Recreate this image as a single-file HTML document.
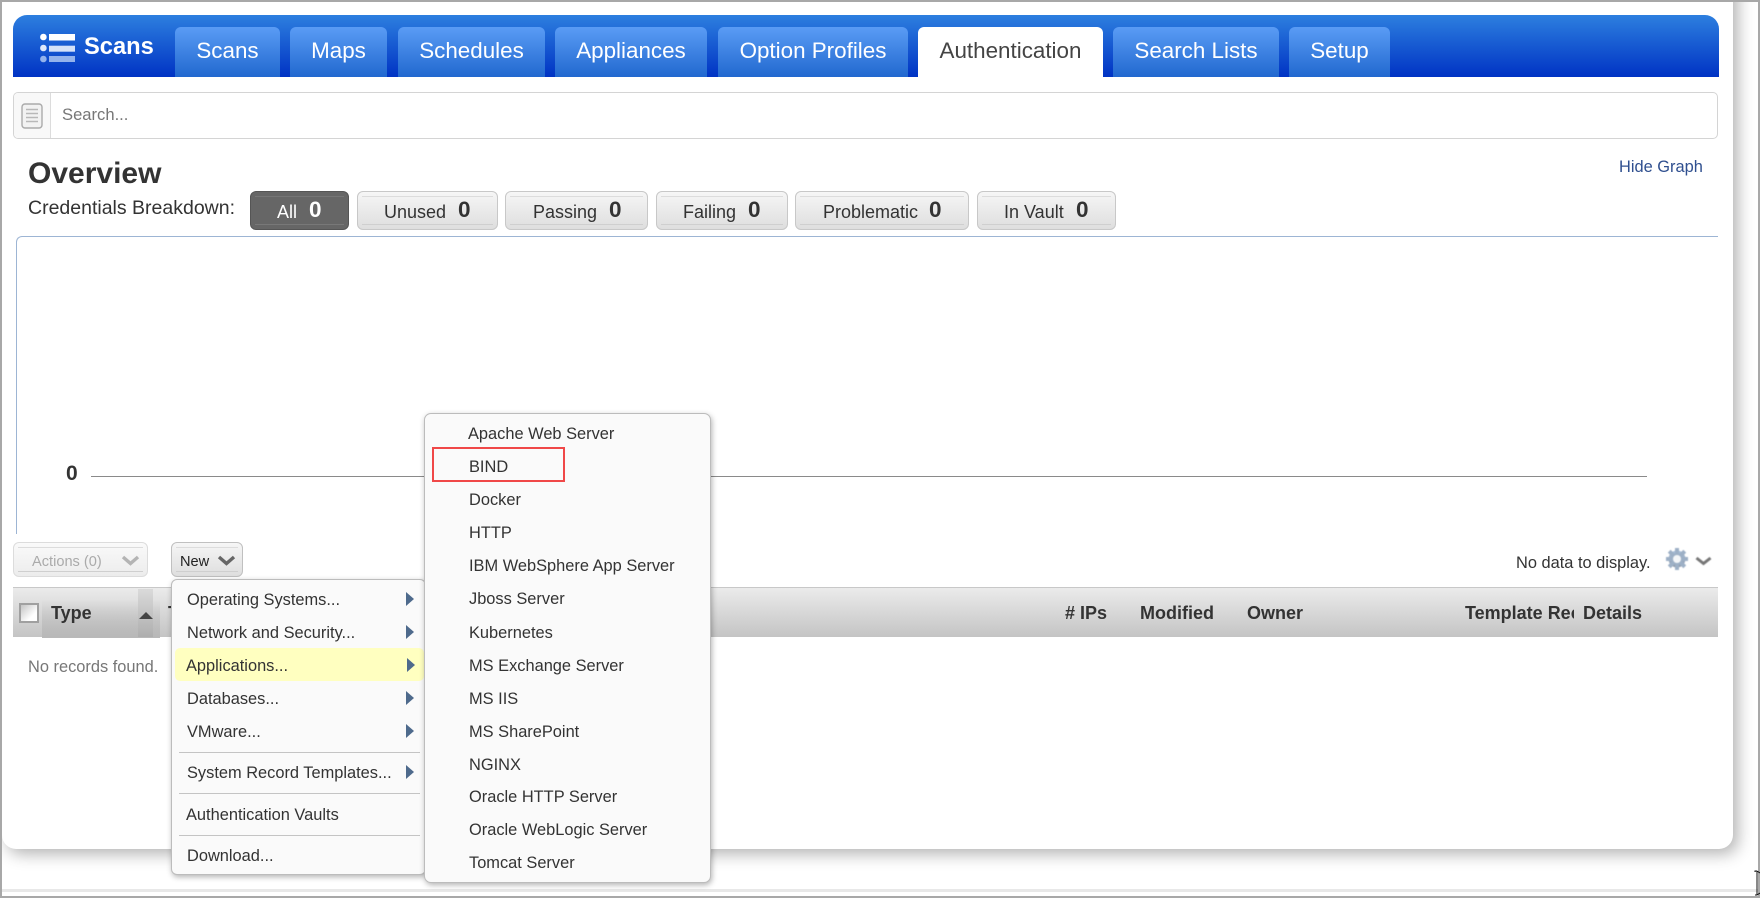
<!DOCTYPE html>
<html><head><meta charset="utf-8"><title>Authentication</title>
<style>
html,body{margin:0;padding:0;width:1760px;height:898px;overflow:hidden;background:#fff;font-family:"Liberation Sans",Arial,sans-serif;color:#333}
*{box-sizing:border-box}
.a{position:absolute}
.t{position:absolute;white-space:nowrap;line-height:24px;height:24px}
.tab{position:absolute;top:27px;height:50px;border-radius:6px 6px 0 0;background:linear-gradient(#5a9cf5,#2168cf);color:#fff;font-size:22.4px;line-height:48px;text-align:center;white-space:nowrap}
.btn{position:absolute;top:191px;height:39px;border:1px solid #c8c8c8;border-radius:6px;background:linear-gradient(#f6f6f6,#dedede)}
.btn:before{content:"";position:absolute;left:4px;right:4px;top:4px;bottom:4px;border-top:1px solid #dcdcdc;border-bottom:1px solid #cfcfcf}
.dark:before{border-top-color:#757575;border-bottom-color:#787878}
.bl{font-size:18px;top:200px;color:#333}
.bn{font-size:22.5px;font-weight:bold;top:198px;color:#333}
.m{font-size:16.4px;color:#333}
.th{font-size:18px;font-weight:bold;color:#333;top:601px}
.ar{position:absolute;width:0;height:0;border-left:8px solid #4e6a8c;border-top:7px solid transparent;border-bottom:7px solid transparent}
.sep{position:absolute;height:1px;background:#c4c4c4;left:179px;width:241px}
</style></head>
<body>
<!-- frame -->
<div class="a" style="left:0;top:0;width:1760px;height:898px;background:#fff"></div>
<div class="a" style="left:2px;top:889px;width:1756px;height:3px;background:#e8e8e8"></div>
<!-- panel -->
<div class="a" style="left:2px;top:-20px;width:1731px;height:869px;background:#fff;border-radius:0 0 14px 14px;box-shadow:5px 5px 16px rgba(0,0,0,.3)"></div>
<div class="a" style="left:0;top:0;width:1760px;height:2px;background:#a8a8a8"></div>
<div class="a" style="left:0;top:896px;width:1760px;height:2px;background:#a8a8a8"></div>
<div class="a" style="left:0;top:0;width:2px;height:898px;background:#a8a8a8"></div>
<div class="a" style="left:1758px;top:0;width:2px;height:898px;background:#a8a8a8"></div>

<!-- header -->
<div class="a" style="left:13px;top:15px;width:1706px;height:62px;border-radius:14px 14px 0 0;background:linear-gradient(#2d7fdf,#0033c4)"></div>
<svg class="a" style="left:40px;top:32px" width="36" height="32" viewBox="0 0 36 32">
<circle cx="3.4" cy="5" r="3.3" fill="#fff"/><rect x="9" y="2" width="26" height="6.5" fill="#fff"/>
<circle cx="3.4" cy="16" r="3.3" fill="#dfe8fa"/><rect x="9" y="13.7" width="26" height="6" fill="#d5e1f8"/>
<circle cx="3.4" cy="27" r="3.3" fill="#93b2ec"/><rect x="9" y="24" width="26" height="6" fill="#93b2ec"/>
</svg>
<div class="t" style="left:84px;top:35px;font-size:23.7px;font-weight:bold;color:#fff">Scans</div>
<div class="tab" style="left:175px;width:105px">Scans</div>
<div class="tab" style="left:290px;width:97px">Maps</div>
<div class="tab" style="left:398px;width:147px">Schedules</div>
<div class="tab" style="left:555px;width:152px">Appliances</div>
<div class="tab" style="left:718px;width:190px">Option Profiles</div>
<div class="tab" style="left:918px;width:185px;background:#fff;color:#444">Authentication</div>
<div class="tab" style="left:1113px;width:166px">Search Lists</div>
<div class="tab" style="left:1289px;width:101px">Setup</div>

<!-- search -->
<div class="a" style="left:13px;top:92px;width:1705px;height:47px;border:1px solid #d4d4d4;border-radius:5px;background:#fff"></div>
<div class="a" style="left:14px;top:93px;width:37px;height:45px;background:#f8f8f8;border-right:1px solid #dcdcdc;border-radius:4px 0 0 4px"></div>
<svg class="a" style="left:21px;top:103px" width="22" height="26" viewBox="0 0 22 26">
<rect x="1" y="1" width="20" height="24" rx="3" fill="#f2f2f2" stroke="#aaa" stroke-width="1.4"/>
<path d="M5 6.5H17M5 10.5H17M5 14.5H17M5 18.5H17" stroke="#b8b8b8" stroke-width="1.4"/>
</svg>
<div class="t" style="left:62px;top:103px;font-size:16.6px;color:#777">Search...</div>

<!-- overview -->
<div class="t" style="left:28px;top:162px;font-size:30px;font-weight:bold;color:#333">Overview</div>
<div class="t" style="left:28px;top:196px;font-size:19.5px;color:#333">Credentials Breakdown:</div>
<div class="t" style="left:1619px;top:155px;font-size:16.4px;color:#2f4f8f">Hide Graph</div>

<div class="btn dark" style="left:250px;width:99px;background:#666;border-color:#555"></div>
<div class="t bl" style="left:277px;color:#fff">All</div><div class="t bn" style="left:309px;color:#fff">0</div>
<div class="btn" style="left:357px;width:141px"></div>
<div class="t bl" style="left:384px">Unused</div><div class="t bn" style="left:458px">0</div>
<div class="btn" style="left:505px;width:143px"></div>
<div class="t bl" style="left:533px">Passing</div><div class="t bn" style="left:609px">0</div>
<div class="btn" style="left:656px;width:132px"></div>
<div class="t bl" style="left:683px">Failing</div><div class="t bn" style="left:748px">0</div>
<div class="btn" style="left:795px;width:174px"></div>
<div class="t bl" style="left:823px">Problematic</div><div class="t bn" style="left:929px">0</div>
<div class="btn" style="left:977px;width:139px"></div>
<div class="t bl" style="left:1004px">In Vault</div><div class="t bn" style="left:1076px">0</div>

<!-- chart -->
<div class="a" style="left:16px;top:236px;width:1702px;height:298px;border-top:1px solid #9db5d4;border-left:1px solid #9db5d4;border-radius:6px 0 0 0"></div>
<div class="t" style="left:66px;top:462px;font-size:21px;font-weight:bold;color:#333">0</div>
<div class="a" style="left:91px;top:476px;width:1556px;height:1px;background:#8a8a8a"></div>

<!-- toolbar -->
<div class="btn" style="left:13px;top:542px;width:135px;height:35px;background:linear-gradient(#fafafa,#ececec);border-color:#dcdcdc"></div>
<div class="t" style="left:32px;top:550px;font-size:14.6px;color:#aaa">Actions (0)</div>
<svg class="a" style="left:121px;top:555px;filter:blur(.3px)" width="19" height="11" viewBox="0 0 19 11"><path d="M2 2L9.5 8.5L17 2" fill="none" stroke="#b4b4b4" stroke-width="3.4"/></svg>
<div class="btn" style="left:171px;top:542px;width:72px;height:35px;border-color:#c0c0c0"></div>
<div class="t" style="left:180px;top:550px;font-size:14.6px;color:#222">New</div>
<svg class="a" style="left:217px;top:555px;filter:blur(.3px)" width="19" height="11" viewBox="0 0 19 11"><path d="M2 2L9.5 8.5L17 2" fill="none" stroke="#666" stroke-width="3.4"/></svg>

<div class="t" style="left:1516px;top:551px;font-size:16.4px;color:#333">No data to display.</div>
<svg class="a" style="left:1665px;top:547px;filter:blur(.6px)" width="24" height="24" viewBox="0 0 24 24">
<defs><linearGradient id="g" x1="0" y1="0" x2="0" y2="1"><stop offset="0" stop-color="#a9c2de"/><stop offset="1" stop-color="#8f99a8"/></linearGradient></defs>
<g fill="url(#g)"><circle cx="12" cy="12" r="8.5"/></g>
<g fill="#9db0c6"><rect x="10" y="1" width="4" height="22"/><rect x="10" y="1" width="4" height="22" transform="rotate(45 12 12)"/><rect x="10" y="1" width="4" height="22" transform="rotate(90 12 12)"/><rect x="10" y="1" width="4" height="22" transform="rotate(135 12 12)"/></g>
<circle cx="12" cy="12" r="4" fill="#f4f6f8"/></svg>
<svg class="a" style="left:1695px;top:556px;filter:blur(.4px)" width="17" height="10" viewBox="0 0 17 10"><path d="M1.5 2L8.5 7.5L15.5 2" fill="none" stroke="#777" stroke-width="3"/></svg>

<!-- table head -->
<div class="a" style="left:13px;top:587px;width:1705px;height:50px;background:linear-gradient(#ebebeb,#c4c4c4);border-top:1px solid #c8c8c8"></div>
<div class="a" style="left:42px;top:600px;width:118px;height:38px;background:linear-gradient(rgba(190,190,190,0),#b8b8b8)"></div>
<div class="a" style="left:138px;top:589px;width:15px;height:48px;background:linear-gradient(#dadada,#aeaeae)"></div>
<div class="a" style="left:19px;top:603px;width:20px;height:20px;border:2px solid #a0a0a0;background:linear-gradient(135deg,#c4c4c4,#fff 70%)"></div>
<div class="t th" style="left:51px">Type</div>
<div class="a" style="left:139px;top:612px;width:0;height:0;border-left:7px solid transparent;border-right:7px solid transparent;border-bottom:7px solid #444"></div>
<div class="t th" style="left:168px">T</div>
<div class="t th" style="left:1065px">#&nbsp;IPs</div>
<div class="t th" style="left:1140px">Modified</div>
<div class="t th" style="left:1247px">Owner</div>
<div class="t th" style="left:1465px;width:109px;overflow:hidden">Template Record</div>
<div class="t th" style="left:1583px">Details</div>
<div class="t" style="left:28px;top:655px;font-size:16.4px;color:#777">No records found.</div>

<!-- cursor -->
<svg class="a" style="left:1754px;top:870px" width="6" height="26" viewBox="0 0 6 26"><path d="M3 1H1V2M3 1V5M3 5V21M3 21V25H1M3 1L6 3M3 25L6 23" fill="none" stroke="#111" stroke-width="1"/></svg>

<!-- menu 1 -->
<div class="a" style="left:171px;top:579px;width:255px;height:296px;background:#fafafa;border:1px solid #bcbcbc;border-radius:6px;box-shadow:1px 2px 6px rgba(0,0,0,.3)"></div>
<div class="a" style="left:175px;top:648px;width:249px;height:33px;background:#ffffc0;border-radius:5px"></div>
<div class="t m" style="left:187px;top:588px">Operating Systems...</div><div class="ar" style="left:406px;top:592px"></div>
<div class="t m" style="left:187px;top:621px">Network and Security...</div><div class="ar" style="left:406px;top:625px"></div>
<div class="t m" style="left:186px;top:654px">Applications...</div><div class="ar" style="left:407px;top:658px"></div>
<div class="t m" style="left:187px;top:687px">Databases...</div><div class="ar" style="left:406px;top:691px"></div>
<div class="t m" style="left:187px;top:720px">VMware...</div><div class="ar" style="left:406px;top:724px"></div>
<div class="sep" style="top:752px"></div>
<div class="t m" style="left:187px;top:761px">System Record Templates...</div><div class="ar" style="left:406px;top:765px"></div>
<div class="sep" style="top:793px"></div>
<div class="t m" style="left:186px;top:803px">Authentication Vaults</div>
<div class="sep" style="top:835px"></div>
<div class="t m" style="left:187px;top:844px">Download...</div>

<!-- menu 2 -->
<div class="a" style="left:424px;top:413px;width:287px;height:470px;background:#fafafa;border:1px solid #bcbcbc;border-radius:7px;box-shadow:1px 2px 6px rgba(0,0,0,.3)"></div>
<div class="t m" style="left:468px;top:422px">Apache Web Server</div>
<div class="t m" style="left:469px;top:455px">BIND</div>
<div class="t m" style="left:469px;top:488px">Docker</div>
<div class="t m" style="left:469px;top:521px">HTTP</div>
<div class="t m" style="left:469px;top:554px">IBM WebSphere App Server</div>
<div class="t m" style="left:469px;top:587px">Jboss Server</div>
<div class="t m" style="left:469px;top:621px">Kubernetes</div>
<div class="t m" style="left:469px;top:654px">MS Exchange Server</div>
<div class="t m" style="left:469px;top:687px">MS IIS</div>
<div class="t m" style="left:469px;top:720px">MS SharePoint</div>
<div class="t m" style="left:469px;top:753px">NGINX</div>
<div class="t m" style="left:469px;top:785px">Oracle HTTP Server</div>
<div class="t m" style="left:469px;top:818px">Oracle WebLogic Server</div>
<div class="t m" style="left:469px;top:851px">Tomcat Server</div>
<div class="a" style="left:432px;top:447px;width:133px;height:35px;border:2px solid #f04848"></div>
</body></html>
